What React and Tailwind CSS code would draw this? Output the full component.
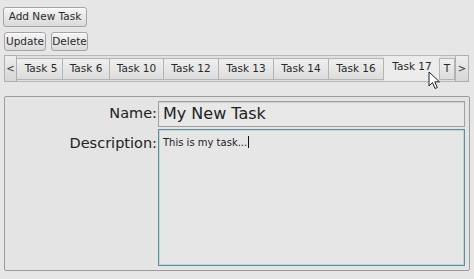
import React from "react";

const font = { fontFamily: '"DejaVu Sans", Verdana, sans-serif' };

function Btn({ children, w }) {
  return (
    <div
      className={`flex items-center justify-center rounded-[3px] border border-[#a4a4a4] bg-gradient-to-b from-[#f5f5f5] to-[#dadada] text-[10.5px] text-[#2a2a2a] shadow-[inset_0_1px_0_#ffffff] ${w}`}
    >
      {children}
    </div>
  );
}

function Tab({ label, w, selected, first }) {
  if (selected) {
    return (
      <div className={`flex h-[26px] shrink-0 items-center justify-center self-end bg-[#ececec] pb-[2px] text-[10.5px] text-[#2a2a2a] ${w}`}>
        {label}
      </div>
    );
  }
  return (
    <div
      className={`mb-[1px] flex h-[22px] shrink-0 items-center justify-center self-end border border-[#b4b4b4] bg-gradient-to-b from-[#f0f0f0] to-[#dcdcdc] text-[10.5px] text-[#2a2a2a] ${w} ${first ? "-ml-[10px] pl-[10px]" : "-ml-px"}`}
    >
      {label}
    </div>
  );
}

export default function App() {
  return (
    <div className="relative flex h-[279px] w-[474px] flex-col overflow-hidden bg-[#e6e6e6]" style={font}>
      <div className="flex pl-[3px] pt-[7px]">
        <Btn w="h-[20px] w-[84px]">Add New Task</Btn>
      </div>
      <div className="mt-[5px] flex gap-[5px] pl-[4px]">
        <Btn w="h-[19px] w-[42px]">Update</Btn>
        <Btn w="h-[19px] w-[37px]">Delete</Btn>
      </div>
      <div className="mt-[4px] flex h-[27px] pl-[4px]">
        <div className="flex h-[27px] w-[13px] shrink-0 items-center justify-center border border-[#b0b0b0] bg-gradient-to-b from-[#eeeeee] to-[#d6d6d6] text-[10px] text-[#333]">
          &lt;
        </div>
        <div className="flex h-[27px] w-[438px] shrink-0 overflow-hidden border-y border-[#b8b8b8] bg-[#e2e2e2] pl-[2px]">
          <Tab label="Task 5" w="w-[54px]" first />
          <Tab label="Task 6" w="w-[48px]" />
          <Tab label="Task 10" w="w-[55px]" />
          <Tab label="Task 12" w="w-[56px]" />
          <Tab label="Task 13" w="w-[56px]" />
          <Tab label="Task 14" w="w-[56px]" />
          <Tab label="Task 16" w="w-[56px]" />
          <Tab label="Task 17" w="w-[56px]" selected />
          <Tab label="T" w="w-[16px]" />
        </div>
        <div className="flex h-[27px] w-[14px] shrink-0 items-center justify-center border border-[#b0b0b0] bg-gradient-to-b from-[#eeeeee] to-[#d6d6d6] text-[10px] text-[#333]">
          &gt;
        </div>
      </div>
      <div className="mx-[4px] mt-[14px] grid h-[175px] grid-cols-[153px_1fr] grid-rows-[26px_1fr] gap-y-[2px] rounded-[2px] border border-[#9c9c9c] bg-[#e4e4e4] pb-[4px] pr-[4px] pt-[4px]">
        <div className="flex items-center justify-end pr-[1px] text-[14.5px] text-[#222]">Name:</div>
        <div className="flex items-center border border-[#a0a0a0] bg-[#e8e8e8] pl-[4px] text-[16px] text-[#222] shadow-[inset_0_1px_1px_#cfcfcf]">
          My New Task
        </div>
        <div className="flex justify-end pr-[1px] pt-[4px] text-[14.5px] text-[#222]">Description:</div>
        <div className="border border-[#5f8e9b] bg-[#e6e6e6] pl-[4px] pt-[4px] text-[10px] text-[#222] shadow-[inset_0_0_0_1px_#bcd8df]">
          <span>This is my task...</span>
          <span className="ml-[1px] inline-block h-[12px] w-px translate-y-[2px] bg-[#111]" />
        </div>
      </div>
      <svg className="absolute left-[428px] top-[71px]" width="14" height="20" viewBox="0 0 14 20">
        <path d="M1 1 L1 15 L4.5 11.5 L7 17.5 L9.3 16.5 L6.8 10.8 L11.5 10.8 Z" fill="#fff" stroke="#222" strokeWidth="1" strokeLinejoin="round" />
      </svg>
    </div>
  );
}
